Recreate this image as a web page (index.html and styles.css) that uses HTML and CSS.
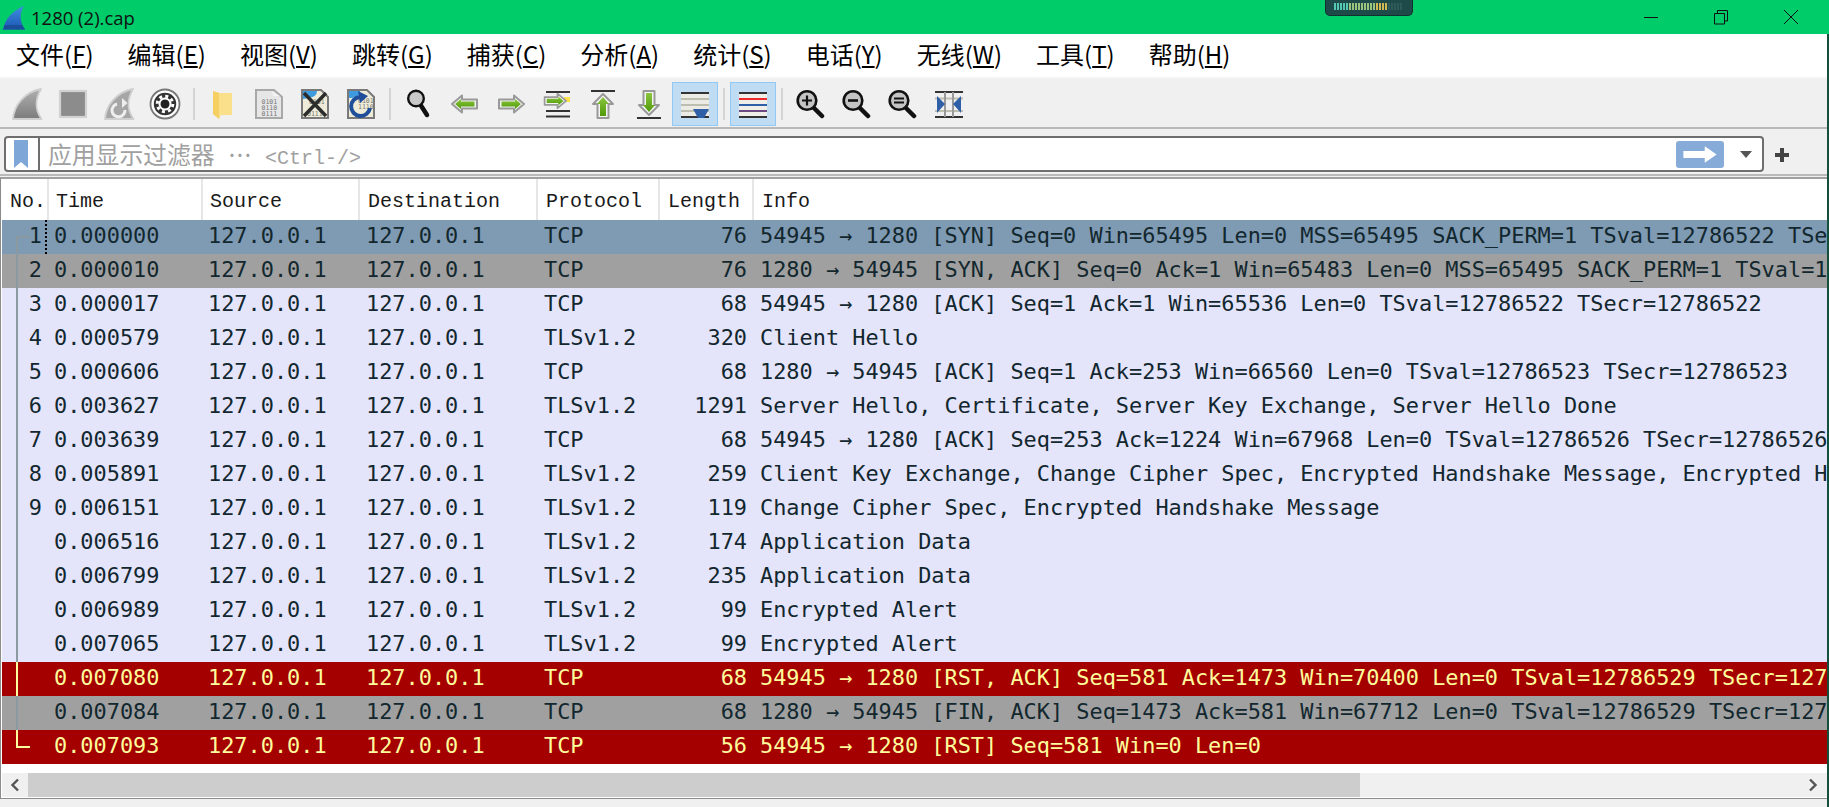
FILE: index.html
```html
<!DOCTYPE html>
<html lang="zh">
<head>
<meta charset="utf-8">
<title>1280 (2).cap</title>
<link rel="stylesheet" href="styles.css">
</head>
<body>
<svg class="defs" width="0" height="0" aria-hidden="true">
  <defs>
    <linearGradient id="fin" x1="0" y1="0" x2="0" y2="1"><stop offset="0" stop-color="#b0b0b0"/><stop offset="1" stop-color="#7c7c7c"/></linearGradient>
    <linearGradient id="grn" x1="0" y1="0" x2="0" y2="1"><stop offset="0" stop-color="#8cc63f"/><stop offset="1" stop-color="#4f9a08"/></linearGradient>
    <linearGradient id="blu" x1="0" y1="0" x2="0" y2="1"><stop offset="0" stop-color="#3f8fe0"/><stop offset="1" stop-color="#1c55b4"/></linearGradient>
    <symbol id="lens" viewBox="0 0 30 30">
      <path d="M17 18 L26 27" stroke="#111" stroke-width="4.500" stroke-linecap="round"/>
      <circle cx="11" cy="11.500" r="9.300" fill="#c4c4c4" stroke="#111" stroke-width="2.600"/>
    </symbol>
    <symbol id="arrow" viewBox="0 0 30 30">
      <path d="M28 15 L18 6.500 V10.500 H3 V19.500 H18 V23.500 Z" fill="#f4f4f4" stroke="#999" stroke-width="2" stroke-linejoin="round"/>
      <path d="M25 15 L19 10 V12.500 H5.500 V17.500 H19 V20 Z" fill="url(#grn)"/>
    </symbol>
  </defs>
</svg>
<div class="app">
  <header class="titlebar">
    <svg class="appicon" viewBox="0 0 22 24"><path d="M0 23.500 C2 13 10 4 21 0 C16 8 17 16 22 23.500 Z" fill="url(#blu)"/><path d="M0 23.500 H22 L19 19 H2 Z" fill="#1b4f9c"/></svg>
    <span class="title">1280 (2).cap</span>
    <div class="meter"><i></i><i></i><i></i><i></i><i></i><i></i><i></i><i></i><i></i><i></i><i></i><i></i><i></i><i></i><i></i><i></i><i></i><i></i><i></i><i></i><i></i><i></i><i></i></div>
    <div class="winbtns">
      <svg viewBox="0 0 16 16"><path d="M1 8.500 H15" stroke="#111" stroke-width="1"/></svg>
      <svg viewBox="0 0 16 16"><path d="M1.500 4.500 H11.500 V15 H1.500 Z M4.500 4.500 V1.500 H14.500 V12 H11.500" fill="none" stroke="#111"/></svg>
      <svg viewBox="0 0 16 16"><path d="M1 1 L15 15 M15 1 L1 15" stroke="#111" stroke-width="1"/></svg>
    </div>
  </header>

  <nav class="menubar">
    <span class="menu">文件(<u>F</u>)</span>
    <span class="menu">编辑(<u>E</u>)</span>
    <span class="menu">视图(<u>V</u>)</span>
    <span class="menu">跳转(<u>G</u>)</span>
    <span class="menu">捕获(<u>C</u>)</span>
    <span class="menu">分析(<u>A</u>)</span>
    <span class="menu">统计(<u>S</u>)</span>
    <span class="menu">电话(<u>Y</u>)</span>
    <span class="menu">无线(<u>W</u>)</span>
    <span class="menu">工具(<u>T</u>)</span>
    <span class="menu">帮助(<u>H</u>)</span>
  </nav>

  <div class="toolbar">
    <span class="tool"><svg viewBox="0 0 30 30"><path d="M1 30 C2 16 13 3 29 0 C23 10 23 21 29.500 30 Z" fill="url(#fin)" stroke="#cfcfcf" stroke-width="1.800" stroke-linejoin="round"/></svg></span>
    <span class="tool"><svg viewBox="0 0 30 30"><rect x="2" y="2" width="26" height="26" fill="#8c8c8c" stroke="#d2d2d2" stroke-width="2.200"/></svg></span>
    <span class="tool"><svg viewBox="0 0 30 30"><path d="M1 30 C2 16 13 3 29 0 C23 10 23 21 29.500 30 Z" fill="#a6a6a6" stroke="#cfcfcf" stroke-width="1.800" stroke-linejoin="round"/><path d="M13 15 A6.500 6.500 0 1 0 21 21" fill="none" stroke="#eee" stroke-width="3"/><path d="M18 9 V19 L23.500 14 Z" fill="#eee"/></svg></span>
    <span class="tool"><svg viewBox="0 0 30 30"><circle cx="15" cy="15" r="14.500" fill="#fff" stroke="#777" stroke-width="1.800"/><circle cx="15" cy="15" r="11.200" fill="#333"/><circle cx="15" cy="15" r="7.800" fill="none" stroke="#fff" stroke-width="3" stroke-dasharray="3 3.130"/><circle cx="15" cy="15" r="5.500" fill="none" stroke="#fff" stroke-width="2"/><circle cx="15" cy="15" r="4" fill="#222"/></svg></span>
    <span class="sep"></span>
    <span class="tool"><svg viewBox="0 0 30 30"><path d="M5 2 L11 4 H24 V26 H13 L11 30 L5 25 Z" fill="#fbe08c"/><path d="M5 2 L11 4 V27 L11 30 L5 25 Z" fill="#f6cf63"/></svg></span>
    <span class="tool"><svg viewBox="0 0 30 30"><path d="M2 1 H20 L28 8 V29 H2 Z" fill="#e6e6e6" stroke="#a8a8a8" stroke-width="2"/><path d="M17 2 L20 7 H26" fill="#f4f4f4"/><text class="bits" x="7.500" y="14.500">0101</text><text class="bits" x="7.500" y="20.500">0110</text><text class="bits" x="7.500" y="26.500">0111</text></svg></span>
    <span class="tool"><svg viewBox="0 0 30 30"><path d="M2 1 H21 L28 8 V29 H2 Z" fill="#eeecd8" stroke="#7a7a7a" stroke-width="2"/><path d="M3 2 H17 C17 8 10 9 3 10 Z" fill="#3f9be0"/><text class="bits" x="9" y="15">0101</text><text class="bits" x="7" y="27">0111</text><path d="M4 4 L26 27 M26 4 L4 27" stroke="#2c2c2c" stroke-width="3.500"/></svg></span>
    <span class="tool"><svg viewBox="0 0 30 30"><path d="M2 1 H21 L28 8 V29 H2 Z" fill="#eeecd8" stroke="#7a7a7a" stroke-width="2"/><path d="M3 2 H14 C14 8 8 9 3 9 Z" fill="#3f9be0"/><text class="bits" x="12" y="14">0101</text><text class="bits" x="12" y="20">1110</text><path d="M24 19 A9.500 9.500 0 1 1 14 8" fill="none" stroke="#1f4f9a" stroke-width="4"/><path d="M12 2 L22 7 L14 14 Z" fill="#1f4f9a"/></svg></span>
    <span class="sep"></span>
    <span class="tool"><svg viewBox="0 0 30 30"><path d="M16 15 L23 26" stroke="#111" stroke-width="4.500" stroke-linecap="round"/><circle cx="12" cy="9.500" r="7.800" fill="#c9c9c9" stroke="#111" stroke-width="2.400"/></svg></span>
    <span class="tool"><svg class="flip" viewBox="0 0 30 30"><use href="#arrow"/></svg></span>
    <span class="tool"><svg viewBox="0 0 30 30"><use href="#arrow"/></svg></span>
    <span class="tool"><svg viewBox="0 0 30 30"><path d="M4 3 H28 M4 22 H28 M4 27.500 H28" stroke="#333" stroke-width="2"/><rect x="22" y="8" width="6" height="5" fill="#fbe04a"/><g transform="translate(0 -1) scale(.86)"><use href="#arrow" width="30" height="30"/></g></svg></span>
    <span class="tool"><svg viewBox="0 0 30 30"><path d="M3 2 H27" stroke="#333" stroke-width="2"/><path d="M15 5 L25 15 H20.500 V29 H9.500 V15 H5 Z" fill="#f4f4f4" stroke="#999" stroke-width="2" stroke-linejoin="round"/><path d="M15 8 L21 15 H18 V27 H12 V15 H9 Z" fill="url(#grn)"/></svg></span>
    <span class="tool"><svg viewBox="0 0 30 30"><path d="M3 29 H27" stroke="#333" stroke-width="2"/><path d="M15 26 L25 16 H20.500 V2 H9.500 V16 H5 Z" fill="#f4f4f4" stroke="#999" stroke-width="2" stroke-linejoin="round"/><path d="M15 23 L21 16 H18 V4 H12 V16 H9 Z" fill="url(#grn)"/></svg></span>
    <span class="tool on"><svg viewBox="0 0 30 30"><rect x="1" y="3" width="28" height="25" fill="#eceae4"/><path d="M1 4 H29 M1 28 H29" stroke="#333" stroke-width="2"/><path d="M1 10 H29 M1 16 H29 M1 22 H29" stroke="#bdbdb0" stroke-width="2"/><path d="M13 20 H29 L24 29 H18 Z" fill="#2f5fa6"/></svg></span>
    <span class="sep"></span>
    <span class="tool on"><svg viewBox="0 0 30 30"><rect x="1" y="3" width="28" height="25" fill="#f0eee8"/><path d="M1 4 H29 M1 28 H29" stroke="#333" stroke-width="2"/><path d="M1 10 H29" stroke="#ee2a2a" stroke-width="2"/><path d="M1 16 H29" stroke="#2f5fa6" stroke-width="2"/><path d="M1 22 H29" stroke="#6b4a80" stroke-width="2"/></svg></span>
    <span class="sep"></span>
    <span class="tool"><svg viewBox="0 0 30 30"><use href="#lens"/><path d="M6 11.500 H16 M11 6.500 V16.500" stroke="#111" stroke-width="2.200"/></svg></span>
    <span class="tool"><svg viewBox="0 0 30 30"><use href="#lens"/><path d="M6 11.500 H16" stroke="#111" stroke-width="2.600"/></svg></span>
    <span class="tool"><svg viewBox="0 0 30 30"><use href="#lens"/><path d="M6 9.500 H16 M6 13.500 H16" stroke="#111" stroke-width="2.200"/></svg></span>
    <span class="tool"><svg viewBox="0 0 30 30"><path d="M1 3 H29 M1 28 H29" stroke="#333" stroke-width="2"/><path d="M1 9.500 H29 M1 22 H29" stroke="#bdbdb0" stroke-width="2"/><path d="M11 3 V28 M19 3 V28" stroke="#999" stroke-width="2"/><path d="M3 7 L11 15 L3 24 Z M27 7 L19 15 L27 24 Z" fill="#2f5fa6"/></svg></span>
  </div>

  <div class="filterbar">
    <div class="filter">
      <svg class="bookmark" viewBox="0 0 14 28"><path d="M0 0 H14 V28 L7 22 L0 28 Z" fill="#7ea6d6"/></svg>
      <span class="placeholder"><span class="cjk">应用显示过滤器 ⋯ </span>&lt;Ctrl-/&gt;</span>
      <span class="apply"><svg viewBox="0 0 30 16"><path d="M1 5 H19 V1 L29 8 L19 15 V11 H1 Z" fill="#fff"/></svg></span>
      <span class="drop"></span>
    </div>
    <svg class="plus" viewBox="0 0 14 14"><path d="M7 0 V14 M0 7 H14" stroke="#444" stroke-width="4"/></svg>
  </div>

  <main class="list">
    <div class="head">
      <span class="hc">No.</span><span class="hc">Time</span><span class="hc">Source</span><span class="hc">Destination</span><span class="hc">Protocol</span><span class="hc">Length</span><span class="hc">Info</span>
    </div>
    <div class="row syn sel"><span class="no rel start">1</span><span>0.000000</span><span>127.0.0.1</span><span>127.0.0.1</span><span>TCP</span><span class="len">76</span><span class="info">54945 → 1280 [SYN] Seq=0 Win=65495 Len=0 MSS=65495 SACK_PERM=1 TSval=12786522 TSecr=0 WS=128</span></div>
    <div class="row gray"><span class="no rel">2</span><span>0.000010</span><span>127.0.0.1</span><span>127.0.0.1</span><span>TCP</span><span class="len">76</span><span class="info">1280 → 54945 [SYN, ACK] Seq=0 Ack=1 Win=65483 Len=0 MSS=65495 SACK_PERM=1 TSval=12786522 TSecr=12786522 WS=128</span></div>
    <div class="row"><span class="no rel">3</span><span>0.000017</span><span>127.0.0.1</span><span>127.0.0.1</span><span>TCP</span><span class="len">68</span><span class="info">54945 → 1280 [ACK] Seq=1 Ack=1 Win=65536 Len=0 TSval=12786522 TSecr=12786522</span></div>
    <div class="row"><span class="no rel">4</span><span>0.000579</span><span>127.0.0.1</span><span>127.0.0.1</span><span>TLSv1.2</span><span class="len">320</span><span class="info">Client Hello</span></div>
    <div class="row"><span class="no rel">5</span><span>0.000606</span><span>127.0.0.1</span><span>127.0.0.1</span><span>TCP</span><span class="len">68</span><span class="info">1280 → 54945 [ACK] Seq=1 Ack=253 Win=66560 Len=0 TSval=12786523 TSecr=12786523</span></div>
    <div class="row"><span class="no rel">6</span><span>0.003627</span><span>127.0.0.1</span><span>127.0.0.1</span><span>TLSv1.2</span><span class="len">1291</span><span class="info">Server Hello, Certificate, Server Key Exchange, Server Hello Done</span></div>
    <div class="row"><span class="no rel">7</span><span>0.003639</span><span>127.0.0.1</span><span>127.0.0.1</span><span>TCP</span><span class="len">68</span><span class="info">54945 → 1280 [ACK] Seq=253 Ack=1224 Win=67968 Len=0 TSval=12786526 TSecr=12786526</span></div>
    <div class="row"><span class="no rel">8</span><span>0.005891</span><span>127.0.0.1</span><span>127.0.0.1</span><span>TLSv1.2</span><span class="len">259</span><span class="info">Client Key Exchange, Change Cipher Spec, Encrypted Handshake Message, Encrypted Handshake Message</span></div>
    <div class="row"><span class="no rel">9</span><span>0.006151</span><span>127.0.0.1</span><span>127.0.0.1</span><span>TLSv1.2</span><span class="len">119</span><span class="info">Change Cipher Spec, Encrypted Handshake Message</span></div>
    <div class="row"><span class="no rel"></span><span>0.006516</span><span>127.0.0.1</span><span>127.0.0.1</span><span>TLSv1.2</span><span class="len">174</span><span class="info">Application Data</span></div>
    <div class="row"><span class="no rel"></span><span>0.006799</span><span>127.0.0.1</span><span>127.0.0.1</span><span>TLSv1.2</span><span class="len">235</span><span class="info">Application Data</span></div>
    <div class="row"><span class="no rel"></span><span>0.006989</span><span>127.0.0.1</span><span>127.0.0.1</span><span>TLSv1.2</span><span class="len">99</span><span class="info">Encrypted Alert</span></div>
    <div class="row"><span class="no rel"></span><span>0.007065</span><span>127.0.0.1</span><span>127.0.0.1</span><span>TLSv1.2</span><span class="len">99</span><span class="info">Encrypted Alert</span></div>
    <div class="row red"><span class="no rel"></span><span>0.007080</span><span>127.0.0.1</span><span>127.0.0.1</span><span>TCP</span><span class="len">68</span><span class="info">54945 → 1280 [RST, ACK] Seq=581 Ack=1473 Win=70400 Len=0 TSval=12786529 TSecr=12786529</span></div>
    <div class="row gray"><span class="no rel"></span><span>0.007084</span><span>127.0.0.1</span><span>127.0.0.1</span><span>TCP</span><span class="len">68</span><span class="info">1280 → 54945 [FIN, ACK] Seq=1473 Ack=581 Win=67712 Len=0 TSval=12786529 TSecr=12786529</span></div>
    <div class="row red"><span class="no rel end"></span><span>0.007093</span><span>127.0.0.1</span><span>127.0.0.1</span><span>TCP</span><span class="len">56</span><span class="info">54945 → 1280 [RST] Seq=581 Win=0 Len=0</span></div>
    <div class="hscroll">
      <span class="sbtn"><svg viewBox="0 0 10 14"><path d="M8 1.500 L2.500 7 L8 12.500" fill="none" stroke="#555" stroke-width="2.400"/></svg></span>
      <span class="thumb"></span>
      <span class="sbtn right"><svg viewBox="0 0 10 14"><path d="M2 1.500 L7.500 7 L2 12.500" fill="none" stroke="#555" stroke-width="2.400"/></svg></span>
    </div>
  </main>
</div>
</body>
</html>
```

FILE: styles.css
```css
* { box-sizing: border-box; }
html, body { margin: 0; height: 100%; overflow: hidden; }
body { background: #f0f0f0; }
.defs { position: absolute; }

.app {
  width: 1829px;
  height: 807px;
  display: flex;
  flex-direction: column;
  border-right: 2px solid #14503c;
  background: #f0f0f0;
  font-family: "Noto Sans", "Noto Sans CJK SC", sans-serif;
  color: #000;
  position: relative;
}

/* title bar */
.titlebar {
  height: 34px;
  flex: none;
  background: #00cc6a;
  display: flex;
  align-items: center;
  padding-left: 3px;
  margin-right: -2px;
}
.appicon { width: 22px; height: 24px; flex: none; margin-top: 2px; }
.title { margin-left: 6px; font-size: 18.500px; font-family: "Open Sans", sans-serif; color: #111; }
.meter {
  position: absolute;
  left: 1325px;
  top: 0;
  width: 88px;
  height: 16px;
  background: #1f4a4a;
  border: 1px solid #12302f;
  border-top: 0;
  border-radius: 0 0 5px 5px;
  display: flex;
  gap: 1px;
  padding: 3px 8px 0;
}
.meter i { display: block; width: 2px; height: 7px; background: #9cc47c; }
.meter i:nth-child(-n+5) { background: #55c8b4; }
.meter i:nth-child(n+15):nth-child(-n+18) { background: #d2b850; }
.meter i:nth-child(n+19) { background: #2f5a58; }
.winbtns { margin-left: auto; display: flex; align-items: center; gap: 54px; padding-right: 30px; }
.winbtns svg { width: 16px; height: 16px; display: block; }

/* menu */
.menubar {
  height: 45px;
  flex: none;
  background: #fff;
  display: flex;
  align-items: center;
  padding-bottom: 3px;
  border-bottom: 2px solid #f4f4f4;
}
.menu {
  padding: 0 16px;
  margin-right: 2px;
  font-size: 24px;
  line-height: 30px;
  font-family: "Noto Sans CJK SC", sans-serif;
  white-space: nowrap;
}

/* toolbar */
.toolbar {
  height: 50px;
  flex: none;
  display: flex;
  align-items: center;
  padding: 2px 0 0 4px;
  border-bottom: 2px solid #b9b9b9;
}
.tool {
  width: 46px;
  height: 44px;
  flex: none;
  display: flex;
  align-items: center;
  justify-content: center;
  border: 1px solid transparent;
}
.tool svg { width: 30px; height: 30px; display: block; overflow: visible; }
.tool svg.flip { transform: scaleX(-1); }
.tool.on { background: #c0dcf3; border-color: #90c8f6; }
.sep { width: 2px; height: 32px; margin: 0 5px; background: #d4d4d4; flex: none; }
.bits { font: 6.500px "DejaVu Sans Mono", monospace; fill: #777; }

/* display filter */
.filterbar {
  height: 47px;
  flex: none;
  display: flex;
  align-items: flex-start;
  padding: 7px 0 0 4px;
  border-bottom: 2px solid #b9b9b9;
}
.filter {
  width: 1760px;
  height: 36px;
  display: flex;
  align-items: center;
  background: #fff;
  border: 2px solid #6e6e6e;
  border-radius: 4px;
  padding: 0 0 0 8px;
}
.bookmark { width: 14px; height: 28px; flex: none; }
.placeholder {
  flex: 1;
  height: 32px;
  margin-left: 10px;
  padding-left: 8px;
  border-left: 2px solid #6e6e6e;
  font: 20px/31px "Liberation Mono", "Noto Sans CJK SC", monospace;
  color: #a0a0a0;
  white-space: pre;
}
.cjk { font-family: "Noto Sans CJK SC", sans-serif; font-size: 23.800px; word-spacing: 8px; }
.apply {
  width: 48px;
  height: 27px;
  background: #86abd8;
  border-radius: 3px;
  display: flex;
  align-items: center;
  justify-content: center;
}
.apply svg { width: 40px; height: 19px; }
.drop {
  width: 0;
  height: 0;
  margin: 0 10px 0 16px;
  border-left: 6px solid transparent;
  border-right: 6px solid transparent;
  border-top: 7px solid #555;
}
.plus { width: 14px; height: 14px; margin: 12px 0 0 11px; }

/* packet list */
.list {
  flex: 1;
  min-height: 0;
  margin: 1px 0 8px;
  background: #fff;
  border: 1px solid #8c8c8c;
  border-right: 0;
  border-top: 2px solid #a0a0a0;
  padding-left: 1px;
  overflow: hidden;
  display: flex;
  flex-direction: column;
}
.head, .row {
  display: grid;
  grid-template-columns: 46px 154px 157px 178px 122px 94px minmax(0, 1fr);
  flex: none;
}
.head {
  height: 41px;
  margin-left: -1px;
  grid-template-columns: 48px 154px 157px 178px 122px 94px minmax(0, 1fr);
  font: 20px/46px "Liberation Mono", monospace;
  color: #1a1a1a;
}
.hc {
  padding-left: 8px;
  border-right: 2px solid #e6e6e6;
  white-space: nowrap;
}
.hc:nth-child(2), .hc:nth-child(3) { padding-left: 7px; }
.hc:first-child { padding-left: 9px; }
.hc:last-child { border-right: 0; }
.row {
  height: 34px;
  font: 21.900px/31px "DejaVu Sans Mono", monospace;
  background: #e4e4fb;
  color: #12272e;
  white-space: nowrap;
}
.row > span { padding-left: 7px; overflow: hidden; }
.row > span:nth-child(2), .row > span:nth-child(3) { padding-left: 6px; }
.row .no { padding: 0 6px 0 0; text-align: right; }
.row .len { padding: 0 6px 0 0; text-align: right; }
.row.syn { background: #7f9ab3; }
.row.gray { background: #a0a0a0; }
.row.red { background: #a40000; color: #fffc9c; }

/* related-packet gutter */
.rel { position: relative; }
.rel::before {
  content: "";
  position: absolute;
  left: 14px;
  top: 0;
  bottom: 0;
  width: 2px;
  background: #8a9aa0;
}
.red .rel::before { background: #fffc9c; }
.rel.start::before { top: 16px; }
.rel.start::after {
  content: "";
  position: absolute;
  left: 14px;
  top: 16px;
  width: 14px;
  height: 2px;
  background: #8a9aa0;
}
.sel .rel {
  background-image: linear-gradient(#000 50%, transparent 50%);
  background-size: 2px 4px;
  background-repeat: repeat-y;
  background-position: 43px 0;
}
.rel.end::before { bottom: 16px; }
.rel.end::after {
  content: "";
  position: absolute;
  left: 14px;
  bottom: 16px;
  width: 14px;
  height: 2px;
  background: #fffc9c;
}

/* horizontal scrollbar */
.hscroll {
  margin-top: 9px;
  height: 24px;
  flex: none;
  display: flex;
  background: #f0f0f0;
}
.sbtn { width: 26px; display: flex; align-items: center; justify-content: center; flex: none; }
.sbtn svg { width: 10px; height: 14px; }
.thumb { width: 1332px; background: #cdcdcd; flex: none; }
.sbtn.right { margin-left: auto; width: 28px; }
```
